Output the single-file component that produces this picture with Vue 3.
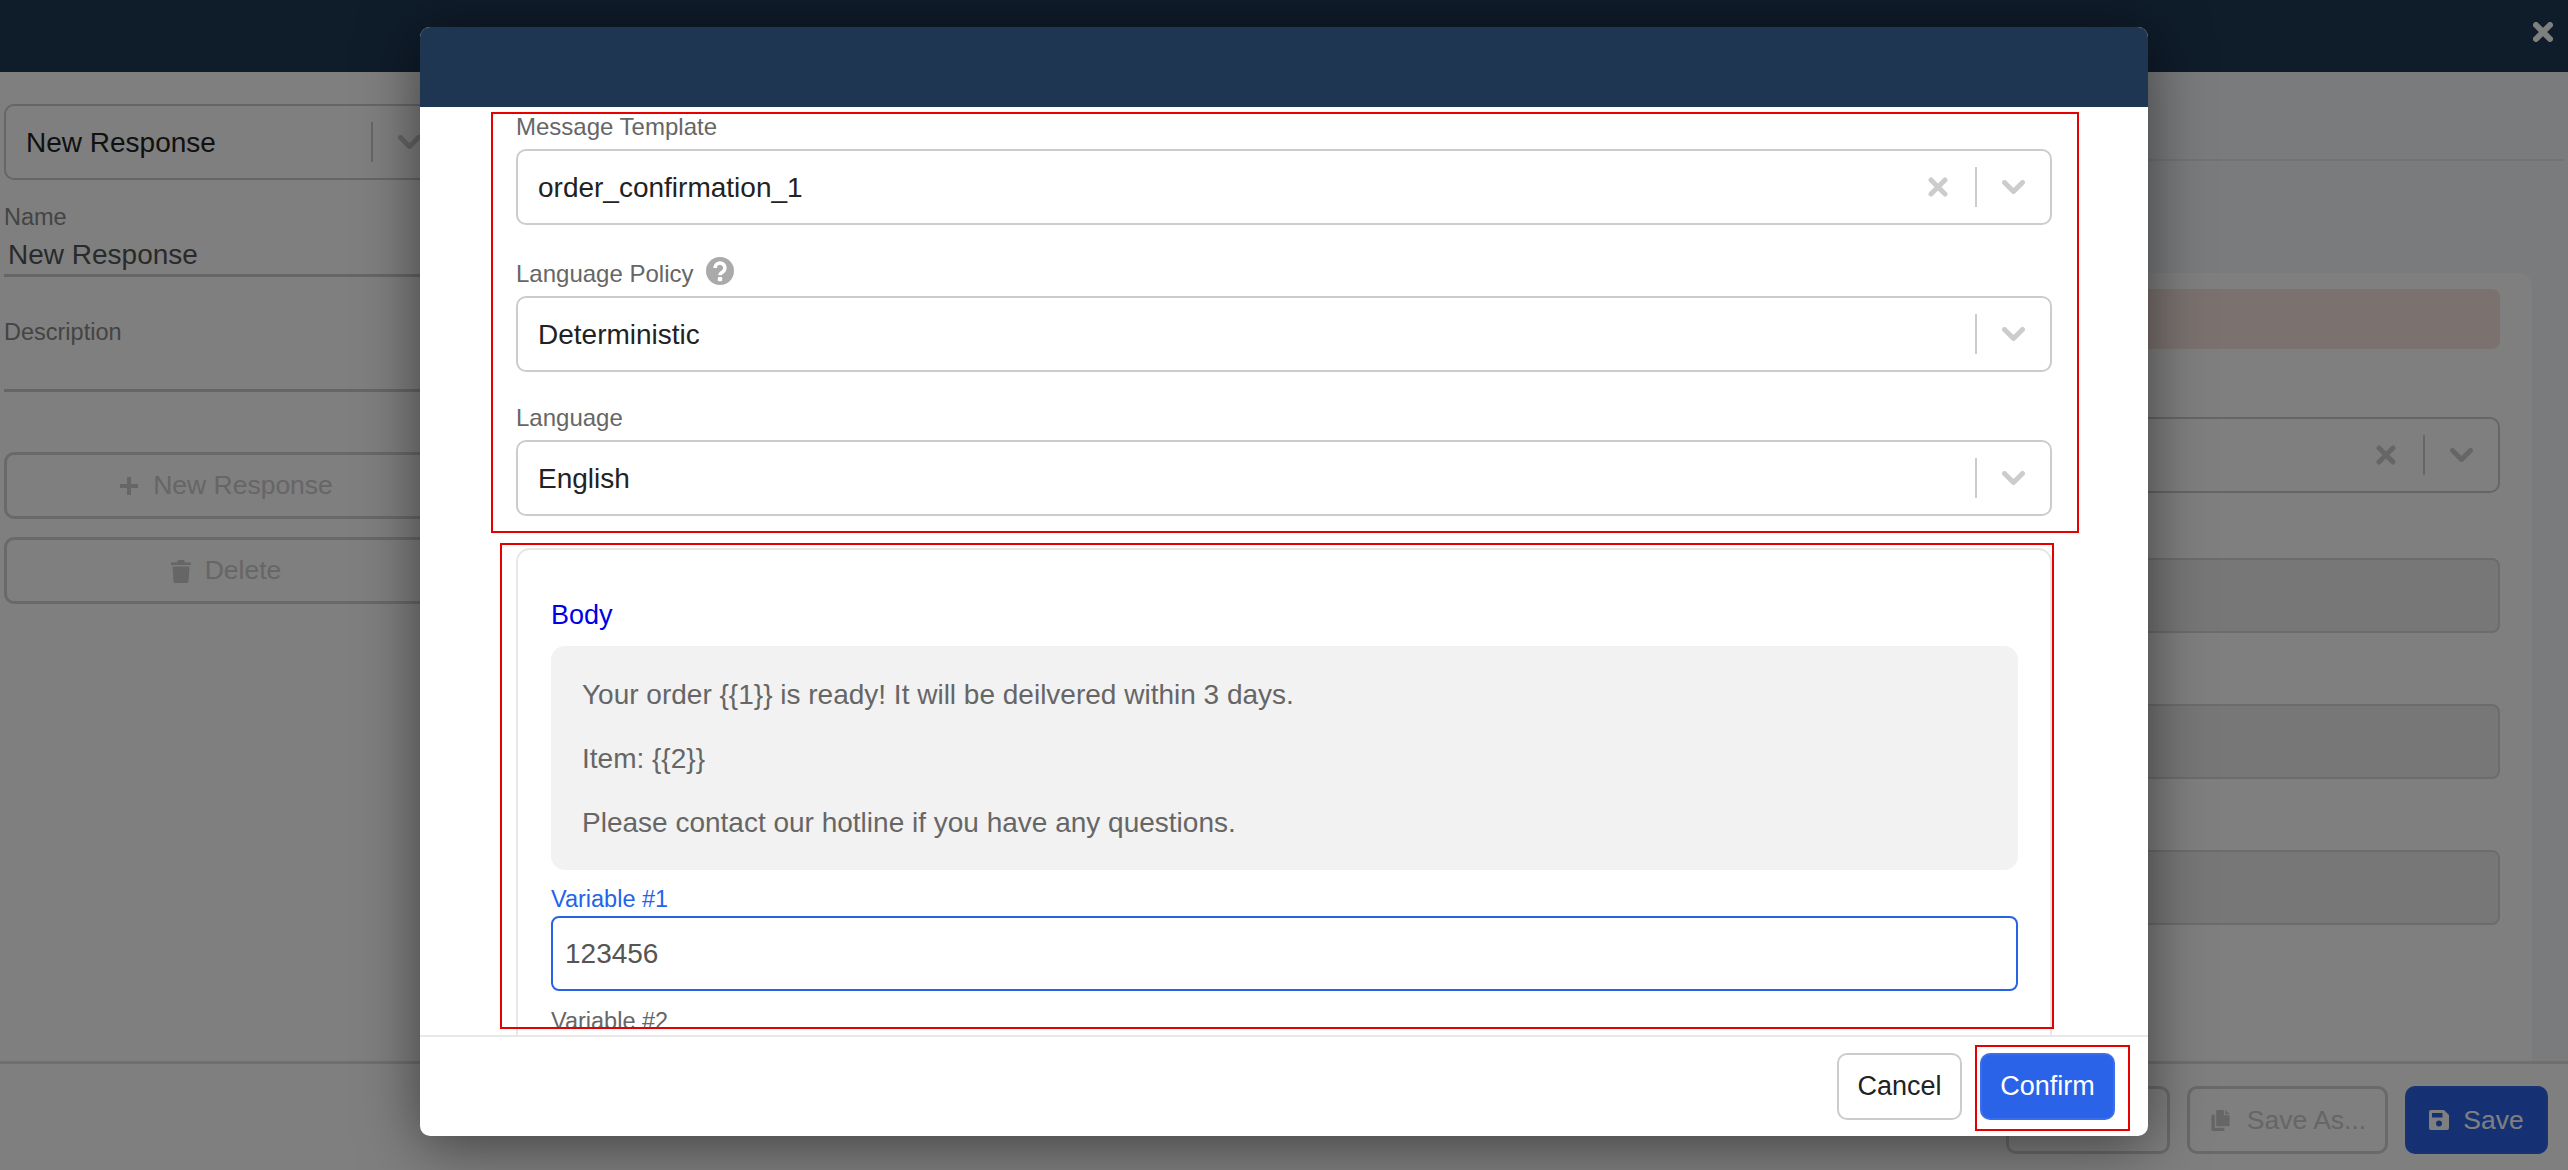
<script setup>
const bodyLines = [
  'Your order {{1}} is ready! It will be deilvered within 3 days.',
  'Item: {{2}}',
  'Please contact our hotline if you have any questions.'
]
</script>

<template>
  <div class="page">
    <header class="topbar">
      <svg class="close" viewBox="0 0 20 20"><path d="M3 3 17 17M17 3 3 17" /></svg>
    </header>

    <main class="main">
      <aside class="side">
        <div class="select side-select">
          <span class="value">New Response</span>
          <span class="sep"></span>
          <span class="arrow"><svg viewBox="0 0 23 14"><path d="M2.5 2.5 11.5 11.5 20.5 2.5" /></svg></span>
        </div>
        <label class="side-label name-label">Name</label>
        <div class="underline">New Response</div>
        <label class="side-label desc-label">Description</label>
        <div class="underline"></div>
        <button class="ghost new-btn">
          <svg class="btn-icon plus" viewBox="0 0 20 20"><path d="M10 1v18M1 10h18" /></svg>
          New Response
        </button>
        <button class="ghost del-btn">
          <svg class="btn-icon trash" viewBox="0 0 20 24"><path d="M0 3.5h6l1-2.5h6l1 2.5h6v2.500H0zM1.500 7.500h17l-1 15a1.500 1.500 0 0 1-1.500 1.500H4a1.500 1.500 0 0 1-1.500-1.500z" /></svg>
          Delete
        </button>
      </aside>

      <section class="content">
        <div class="content-head"></div>
        <div class="content-card">
          <div class="alert"></div>
          <div class="select under-select">
            <span class="value"></span>
            <span class="clear"><svg viewBox="0 0 20 20"><path d="M3 3 17 17M17 3 3 17" /></svg></span>
            <span class="sep"></span>
            <span class="arrow"><svg viewBox="0 0 23 14"><path d="M2.500 2.500 11.500 11.500 20.500 2.500" /></svg></span>
          </div>
          <div class="under-input first"></div>
          <div class="under-input second"></div>
          <div class="under-input third"></div>
        </div>
      </section>
    </main>

    <footer class="page-foot">
      <button class="ghost foot-btn discard"></button>
      <button class="ghost foot-btn save-as">
        <svg class="foot-icon" viewBox="0 0 20 22"><path d="M6 0h7v5.500h6V16a1 1 0 0 1-1 1H6a1 1 0 0 1-1-1V1a1 1 0 0 1 1-1zM14.500 0 19 4.500h-4.500zM3.500 5v13.500h10V22H1a1 1 0 0 1-1-1V6a1 1 0 0 1 1-1z" /></svg>
        Save As...
      </button>
      <button class="foot-btn save">
        <svg class="foot-icon" viewBox="0 0 20 20"><path fill-rule="evenodd" d="M2 0h13l5 5v13a2 2 0 0 1-2 2H2a2 2 0 0 1-2-2V2a2 2 0 0 1 2-2zm1 3v4.500h10.500V3zM10 10.500a3 3 0 1 0 0 6 3 3 0 0 0 0-6z" /></svg>
        Save
      </button>
    </footer>

    <div class="dim"></div>

    <div class="modal">
      <div class="modal-head"></div>
      <div class="modal-body">
        <div class="field">
          <label class="label">Message Template</label>
          <div class="select">
            <span class="value">order_confirmation_1</span>
            <span class="clear"><svg viewBox="0 0 20 20"><path d="M3 3 17 17M17 3 3 17" /></svg></span>
            <span class="sep"></span>
            <span class="arrow"><svg viewBox="0 0 23 14"><path d="M2.500 2.500 11.500 11.500 20.500 2.500" /></svg></span>
          </div>
        </div>
        <div class="field">
          <div class="label-row">
            <label class="label">Language Policy</label>
            <svg class="help" viewBox="0 0 27 27">
              <circle cx="13.500" cy="13.500" r="13.500" />
              <path d="M8.800 10.500a4.700 4.700 0 1 1 7.300 3.900c-1.500 1-2.600 1.500-2.600 3.100" />
              <rect x="11.400" y="19.400" width="4.200" height="4" rx="1" />
            </svg>
          </div>
          <div class="select">
            <span class="value">Deterministic</span>
            <span class="sep"></span>
            <span class="arrow"><svg viewBox="0 0 23 14"><path d="M2.500 2.500 11.500 11.500 20.500 2.500" /></svg></span>
          </div>
        </div>
        <div class="field">
          <label class="label">Language</label>
          <div class="select">
            <span class="value">English</span>
            <span class="sep"></span>
            <span class="arrow"><svg viewBox="0 0 23 14"><path d="M2.500 2.500 11.500 11.500 20.500 2.500" /></svg></span>
          </div>
        </div>

        <div class="preview">
          <div class="preview-title">Body</div>
          <div class="bubble">
            <p v-for="line in bodyLines" :key="line">{{ line }}</p>
          </div>
          <label class="label var-active">Variable #1</label>
          <div class="var-input">123456</div>
          <label class="label var-next">Variable #2</label>
        </div>
      </div>
      <div class="modal-foot">
        <button class="cancel">Cancel</button>
        <button class="confirm">Confirm</button>
      </div>

      <div class="mark mark-form"></div>
      <div class="mark mark-body"></div>
      <div class="mark mark-confirm"></div>
    </div>
  </div>
</template>

<style scoped>
.page {
  position: relative;
  width: 2568px;
  height: 1170px;
  overflow: hidden;
  display: flex;
  flex-direction: column;
  background: #fff;
  font-family: "Liberation Sans", Arial, sans-serif;
}
.topbar {
  height: 72px;
  flex: none;
  background: #1e3854;
  display: flex;
  justify-content: flex-end;
  padding: 22px 15px 0 0;
  box-sizing: border-box;
}
.close {
  width: 20px;
  height: 20px;
  fill: none;
  stroke: #fff;
  stroke-width: 6;
  stroke-linecap: round;
}
.main {
  height: 989px;
  flex: none;
  display: flex;
  background: #f4f6fa;
}
.side {
  width: 448px;
  flex: none;
  box-sizing: border-box;
  padding: 32px 0 0 4px;
  background: #fff;
}
.side-select .value {
  font-size: 28px;
}
.side-label {
  display: block;
  height: 24px;
  line-height: 24px;
  font-size: 23.500px;
  color: #888;
}
.name-label {
  margin-top: 25px;
}
.desc-label {
  margin-top: 43px;
}
.underline {
  height: 48px;
  box-sizing: border-box;
  padding: 6px 0 0 4px;
  line-height: 40px;
  font-size: 28px;
  color: #555;
  border-bottom: 3px solid #ccc;
}
.ghost {
  display: flex;
  align-items: center;
  justify-content: center;
  background: #fff;
  border: 3px solid #d2d2d2;
  border-radius: 10px;
  color: #ccc;
  font-family: inherit;
  font-size: 26.500px;
  padding: 0;
  box-sizing: border-box;
}
.new-btn,
.del-btn {
  width: 100%;
  height: 67px;
  gap: 14px;
}
.new-btn {
  margin-top: 60px;
}
.del-btn {
  margin-top: 18px;
}
.btn-icon {
  fill: #ccc;
}
.plus {
  width: 20px;
  height: 20px;
  fill: none;
  stroke: #ccc;
  stroke-width: 4;
}
.trash {
  width: 20px;
  height: 24px;
}
.content {
  flex: 1;
  min-width: 0;
  display: flex;
  flex-direction: column;
}
.content-head {
  height: 87px;
  flex: none;
  margin-right: 4px;
  border-bottom: 2px solid #e4e6ec;
}
.content-card {
  flex: 1;
  margin: 112px 36px 0 12px;
  padding: 16px 32px 0;
  background: #fff;
  border-radius: 14px 14px 0 0;
}
.alert {
  height: 60px;
  border-radius: 8px;
  background: #f6e4e0;
}
.under-select {
  margin-top: 68px;
}
.under-input {
  height: 75px;
  box-sizing: border-box;
  background: #eee;
  border: 2px solid #d8d8d8;
  border-radius: 8px;
}
.first {
  margin-top: 65px;
}
.second {
  margin-top: 71px;
}
.third {
  margin-top: 71px;
}
.page-foot {
  flex: 1;
  display: flex;
  justify-content: flex-end;
  gap: 17px;
  padding: 22px 20px 0 0;
  box-sizing: border-box;
  border-top: 3px solid #dedede;
  background: #fff;
}
.foot-btn {
  height: 68px;
  gap: 14px;
  font-size: 26.500px;
}
.discard {
  width: 164px;
}
.save-as {
  width: 201px;
  gap: 16px;
  padding-left: 2px;
}
.foot-icon {
  width: 20px;
  height: 21px;
  fill: #ccc;
}
.save {
  width: 143px;
  display: flex;
  align-items: center;
  justify-content: center;
  border: 2px solid #2f66ea;
  border-radius: 10px;
  background: #2a62e8;
  color: #fff;
  font-family: inherit;
}
.save .foot-icon {
  fill: #fff;
  height: 20px;
}
.dim {
  position: absolute;
  inset: 0;
  background: rgba(0, 0, 0, 0.5);
}
.modal {
  position: absolute;
  left: 420px;
  top: 27px;
  width: 1728px;
  height: 1109px;
  display: flex;
  flex-direction: column;
  background: #fff;
  border-radius: 10px;
  box-shadow: 0 8px 60px rgba(0, 0, 0, 0.5);
}
.modal-head {
  height: 80px;
  flex: none;
  background: #1f3653;
  border-radius: 10px 10px 0 0;
}
.modal-body {
  flex: 1;
  min-height: 0;
  overflow: hidden;
  box-sizing: border-box;
  padding: 8px 96px 0 96px;
}
.field {
  margin-bottom: 34px;
}
.field:nth-child(3) {
  margin-bottom: 32px;
}
.label {
  display: block;
  height: 24px;
  line-height: 24px;
  margin-bottom: 10px;
  font-size: 24px;
  color: #666;
}
.label-row {
  display: flex;
  align-items: flex-end;
  gap: 12px;
  height: 27px;
  margin-bottom: 10px;
}
.label-row .label {
  margin-bottom: 0;
}
.help {
  width: 28px;
  height: 28px;
  flex: none;
  align-self: flex-start;
  margin-top: -2px;
  margin-left: 1px;
}
.help circle {
  fill: #aaa;
}
.help path {
  fill: none;
  stroke: #fff;
  stroke-width: 3.400;
}
.help rect {
  fill: #fff;
}
.select {
  height: 76px;
  box-sizing: border-box;
  display: flex;
  align-items: center;
  border: 2px solid #ccc;
  border-radius: 10px;
  background: #fff;
}
.value {
  flex: 1;
  min-width: 0;
  padding: 2px 0 0 20px;
  font-size: 28px;
  color: #222;
}
.clear {
  width: 74px;
  flex: none;
  display: flex;
  justify-content: center;
}
.clear svg {
  width: 20px;
  height: 20px;
  fill: none;
  stroke: #ccc;
  stroke-width: 5;
  stroke-linecap: round;
}
.sep {
  width: 2px;
  height: 40px;
  flex: none;
  background: #ccc;
}
.arrow {
  width: 73px;
  flex: none;
  display: flex;
  justify-content: center;
}
.arrow svg {
  width: 23px;
  height: 14px;
  fill: none;
  stroke: #ccc;
  stroke-width: 5;
  stroke-linecap: round;
  stroke-linejoin: round;
}
.preview {
  height: 560px;
  box-sizing: border-box;
  padding: 50px 32px 0 33px;
  border: 2px solid #e8e8e8;
  border-radius: 14px 14px 0 0;
}
.preview-title {
  height: 30px;
  line-height: 30px;
  margin-bottom: 16px;
  font-size: 27px;
  color: #0000e6;
}
.bubble {
  height: 224px;
  box-sizing: border-box;
  padding: 33px 32px 31px 31px;
  border-radius: 14px;
  background: #f2f2f2;
}
.bubble p {
  margin: 0 0 32px;
  height: 32px;
  line-height: 32px;
  font-size: 28px;
  color: #666;
}
.bubble p:last-child {
  margin: 0;
}
.var-active {
  margin: 17px 0 5px;
  font-size: 23.500px;
  color: #2563eb;
}
.var-input {
  height: 75px;
  box-sizing: border-box;
  display: flex;
  align-items: center;
  padding-left: 12px;
  border: 2px solid #2a62e5;
  border-radius: 8px;
  font-size: 28px;
  color: #555;
}
.var-next {
  margin: 18px 0 0;
  font-size: 23.500px;
}
.modal-foot {
  height: 101px;
  flex: none;
  box-sizing: border-box;
  display: flex;
  justify-content: flex-end;
  gap: 18px;
  padding: 16px 33px 0 0;
  border-top: 2px solid #e8e8e8;
}
.cancel,
.confirm {
  height: 67px;
  box-sizing: border-box;
  padding: 0;
  border-radius: 10px;
  font-family: inherit;
  font-size: 27px;
}
.cancel {
  width: 125px;
  background: #fff;
  border: 2px solid #ccc;
  color: #222;
}
.confirm {
  width: 135px;
  background: #2a62e8;
  border: 2px solid #3a6eec;
  color: #fff;
}
.mark {
  position: absolute;
  box-sizing: border-box;
  border: 2px solid #e60000;
  pointer-events: none;
}
.mark-form {
  left: 71px;
  top: 85px;
  width: 1588px;
  height: 421px;
}
.mark-body {
  left: 80px;
  top: 516px;
  width: 1554px;
  height: 486px;
}
.mark-confirm {
  left: 1555px;
  top: 1018px;
  width: 155px;
  height: 86px;
}
</style>
